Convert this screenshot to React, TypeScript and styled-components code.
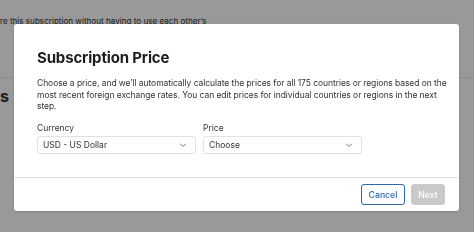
import React from "react";
import styled, { createGlobalStyle } from "styled-components";

const GlobalStyle = createGlobalStyle`
  html, body {
    margin: 0;
    padding: 0;
    width: 474px;
    height: 232px;
    overflow: hidden;
    background: #ffffff;
    font-family: Inter, "Noto Sans", "Liberation Sans", sans-serif;
  }
`;

function ChevronDown() {
  return (
    <svg width="8" height="5" viewBox="0 0 8 5" fill="none">
      <path d="M1.5 1l2.5 2.5 2.5-2.5" stroke="#777" strokeWidth="1" strokeLinecap="round" strokeLinejoin="round" />
    </svg>
  );
}

function App() {
  return (
    <>
      <GlobalStyle />
      <Page>
        <PageText>re this subscription without having to use each other’s</PageText>
        <PageRule />
        <PageHeading>s</PageHeading>
      </Page>
      <Overlay>
        <Modal>
          <Body>
            <Title>Subscription Price</Title>
            <Description>
              Choose a price, and we’ll automatically calculate the prices for all 175 countries or regions based on the
              <br />
              most recent foreign exchange rates. You can edit prices for individual countries or regions in the next
              <br />
              step.
            </Description>
            <Fields>
              <Field>
                <Label>Currency</Label>
                <Select>
                  <span>USD - US Dollar</span>
                  <ChevronDown />
                </Select>
              </Field>
              <Field>
                <Label>Price</Label>
                <Select>
                  <span>Choose</span>
                  <ChevronDown />
                </Select>
              </Field>
            </Fields>
          </Body>
          <Footer>
            <Button>Cancel</Button>
            <Button $primary disabled>
              Next
            </Button>
          </Footer>
        </Modal>
      </Overlay>
    </>
  );
}

const Page = styled.div`
  width: 474px;
  height: 232px;
  padding-top: 16px;
  box-sizing: border-box;
  color: #333;
`;

const PageText = styled.div`
  font-size: 8.1px;
  line-height: 11px;
  white-space: nowrap;
`;

const PageRule = styled.div`
  margin-top: 50px;
  height: 1px;
  background: #e6e6e6;
`;

const PageHeading = styled.div`
  margin-top: 8px;
  font-size: 16px;
  font-weight: 700;
  line-height: 20px;
`;

const Overlay = styled.div`
  position: fixed;
  inset: 0;
  background: rgba(0, 0, 0, 0.4);
  padding: 24px 15px 0 14px;
`;

const Modal = styled.div`
  width: 445px;
  height: 187px;
  background: #fff;
  border-radius: 3px;
  display: flex;
  flex-direction: column;
  box-shadow: 0 1px 3px rgba(0, 0, 0, 0.15);
`;

const Body = styled.div`
  flex: 1;
  padding: 25px 23px 0 23px;
`;

const Title = styled.h2`
  margin: 0;
  font-size: 15px;
  font-weight: 700;
  line-height: 18px;
  color: #1d1d1f;
  letter-spacing: -0.15px;
`;

const Description = styled.p`
  margin: 11px 0 0;
  font-size: 8.5px;
  line-height: 11.5px;
  letter-spacing: -0.06px;
  white-space: nowrap;
  color: #333;
`;

const Fields = styled.div`
  display: grid;
  grid-template-columns: 159px 159px;
  gap: 7px;
  margin-top: 10px;
`;

const Field = styled.div`
  display: flex;
  flex-direction: column;
`;

const Label = styled.label`
  font-size: 8.5px;
  line-height: 11px;
  color: #333;
  margin-bottom: 2.5px;
`;

const Select = styled.div`
  height: 18px;
  box-sizing: border-box;
  border: 1px solid #e2e2e2;
  border-radius: 3px;
  display: flex;
  align-items: center;
  justify-content: space-between;
  padding: 0 8px 0 5px;
  font-size: 8.5px;
  color: #333;
`;

const Footer = styled.div`
  flex: none;
  border-top: 1px solid #e4e4e4;
  height: 33px;
  display: flex;
  justify-content: flex-end;
  align-items: center;
  gap: 6px;
  padding: 0 14px;
`;

const Button = styled.button<{ $primary?: boolean }>`
  width: ${(p) => (p.$primary ? "34px" : "44px")};
  height: 21px;
  box-sizing: border-box;
  padding: 0;
  border-radius: 3px;
  font-family: inherit;
  font-size: 8.7px;
  font-weight: 500;
  border: 1px solid ${(p) => (p.$primary ? "#c9c9c9" : "#2d69ab")};
  background: ${(p) => (p.$primary ? "#c9c9c9" : "#fff")};
  color: ${(p) => (p.$primary ? "#fff" : "#2d69ab")};
`;

export default App;
